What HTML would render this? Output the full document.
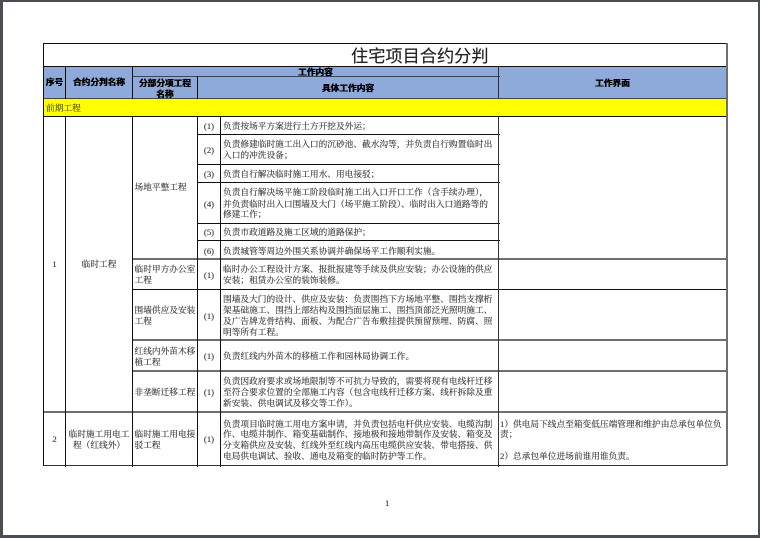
<!DOCTYPE html>
<html lang="zh-CN">
<head>
<meta charset="utf-8">
<title>住宅项目合约分判</title>
<style>
html,body{margin:0;padding:0;background:#fff}
#p{position:relative;width:760px;height:538px;overflow:hidden;background:#fff}
.b{position:absolute;background:#111}
.g{background:#6f6f6f}
#t{position:absolute;left:0;top:0;width:760px;height:538px;filter:blur(.35px);font-family:"Liberation Serif","Noto Serif CJK SC",serif;font-size:8.7px;line-height:12px;color:#3f3f3f;text-shadow:0 0 .4px #5a5550}
#t span{position:absolute;white-space:nowrap}
.c{left:223px}
.n{left:198px;width:22px;text-align:center}
.s{left:134.5px}
.m{left:66px;width:66px;text-align:center}
.o{left:44px;width:21px;text-align:center}
.r{left:500px}
#t .h{font-family:"Liberation Sans","Noto Sans CJK SC",sans-serif;font-weight:700;color:#000;font-size:8.7px;text-align:center;text-shadow:.3px 0 0 #000,-.2px 0 0 #000,0 .2px 0 #000}
</style>
</head>
<body>
<div id="p">
<!-- viewer frame -->
<div class="b" style="left:0;top:0;width:760px;height:2px;background:#4a4d52"></div>
<div class="b" style="left:0;top:0;width:3px;height:538px;background:#4a4d52"></div>
<div class="b" style="left:758px;top:0;width:2px;height:538px;background:#4a4d52"></div>
<div class="b" style="left:0;top:535px;width:760px;height:3px;background:#4a4d52"></div>

<!-- fills -->
<div class="b" style="left:44px;top:67px;width:683px;height:31px;background:#8eaadb"></div>
<div class="b" style="left:44px;top:98px;width:683px;height:18px;background:#ffff00"></div>

<!-- horizontal -->
<div class="b" style="left:43px;top:43px;width:684px;height:1px"></div>
<div class="b" style="left:43px;top:66px;width:684px;height:1px"></div>
<div class="b" style="left:132px;top:76px;width:368px;height:1px;background:#3c4656"></div>
<div class="b" style="left:43px;top:98px;width:684px;height:1px;background:#444a3a"></div>
<div class="b" style="left:43px;top:116px;width:684px;height:1px"></div>
<div class="b" style="left:197px;top:134px;width:303px;height:1px"></div>
<div class="b" style="left:197px;top:164px;width:303px;height:1px"></div>
<div class="b" style="left:197px;top:182px;width:303px;height:1px"></div>
<div class="b" style="left:197px;top:223px;width:303px;height:1px"></div>
<div class="b" style="left:197px;top:240px;width:303px;height:1px"></div>
<div class="b g" style="left:132px;top:258px;width:595px;height:2px"></div>
<div class="b" style="left:132px;top:289px;width:595px;height:1px"></div>
<div class="b g" style="left:132px;top:339px;width:595px;height:2px"></div>
<div class="b g" style="left:132px;top:370px;width:595px;height:2px"></div>
<div class="b g" style="left:43px;top:411px;width:684px;height:2px"></div>
<div class="b" style="left:43px;top:465px;width:684px;height:1px;background:#333"></div>

<!-- vertical: outer -->
<div class="b" style="left:43px;top:43px;width:1px;height:423px"></div>
<div class="b g" style="left:726px;top:43px;width:2px;height:423px"></div>
<!-- vertical: header band only -->
<div class="b" style="left:65px;top:66px;width:1px;height:33px"></div>
<div class="b" style="left:132px;top:66px;width:1px;height:33px"></div>
<div class="b" style="left:197px;top:76px;width:1px;height:23px"></div>
<div class="b" style="left:498px;top:66px;width:1px;height:33px;background:#333"></div>
<!-- vertical: body -->
<div class="b" style="left:65px;top:116px;width:1px;height:351px"></div>
<div class="b" style="left:132px;top:116px;width:1px;height:351px"></div>
<div class="b" style="left:197px;top:116px;width:1px;height:351px"></div>
<div class="b" style="left:220px;top:116px;width:1px;height:351px"></div>
<div class="b" style="left:498px;top:116px;width:1px;height:351px;background:#333"></div>

<div id="t">
<span style="left:351px;top:44px;font:17.2px/24px 'Liberation Sans','Noto Sans CJK SC',sans-serif;color:#222">住宅项目合约分判</span>

<span class="h" style="left:44px;width:21px;top:76px">序号</span>
<span class="h" style="left:66px;width:66px;top:76px">合约分判名称</span>
<span class="h" style="left:133px;width:64px;top:77px">分部分项工程</span>
<span class="h" style="left:133px;width:64px;top:88px">名称</span>
<span class="h" style="left:133px;width:365px;top:66px">工作内容</span>
<span class="h" style="left:198px;width:300px;top:82px">具体工作内容</span>
<span class="h" style="left:499px;width:227px;top:77px">工作界面</span>

<span style="left:46px;top:102px;color:#5a5400">前期工程</span>

<span class="o" style="top:258px">1</span>
<span class="m" style="top:258px">临时工程</span>
<span class="o" style="top:433px">2</span>
<span class="m" style="top:428px">临时施工用电工</span>
<span class="m" style="top:439px">程（红线外）</span>

<span class="s" style="top:181px">场地平整工程</span>
<span class="s" style="top:263px">临时甲方办公室</span>
<span class="s" style="top:274px">工程</span>
<span class="s" style="top:304px">围墙供应及安装</span>
<span class="s" style="top:315px">工程</span>
<span class="s" style="top:345px">红线内外苗木移</span>
<span class="s" style="top:356px">植工程</span>
<span class="s" style="top:386px">非垄断迁移工程</span>
<span class="s" style="top:428px">临时施工用电接</span>
<span class="s" style="top:439px">驳工程</span>

<span class="n" style="top:120px">(1)</span>
<span class="n" style="top:144px">(2)</span>
<span class="n" style="top:168px">(3)</span>
<span class="n" style="top:198px">(4)</span>
<span class="n" style="top:226px">(5)</span>
<span class="n" style="top:245px">(6)</span>
<span class="n" style="top:269px">(1)</span>
<span class="n" style="top:310px">(1)</span>
<span class="n" style="top:350px">(1)</span>
<span class="n" style="top:386px">(1)</span>
<span class="n" style="top:433px">(1)</span>

<span class="c" style="top:120px">负责按场平方案进行土方开挖及外运；</span>
<span class="c" style="top:138px">负责修建临时施工出入口的沉砂池、截水沟等，并负责自行购置临时出</span>
<span class="c" style="top:149px">入口的冲洗设备；</span>
<span class="c" style="top:168px">负责自行解决临时施工用水、用电接驳；</span>
<span class="c" style="top:186px">负责自行解决场平施工阶段临时施工出入口开口工作（含手续办理），</span>
<span class="c" style="top:198px">并负责临时出入口围墙及大门（场平施工阶段）、临时出入口道路等的</span>
<span class="c" style="top:208px">修建工作；</span>
<span class="c" style="top:226px">负责市政道路及施工区域的道路保护；</span>
<span class="c" style="top:245px">负责城管等周边外围关系协调并确保场平工作顺利实施。</span>
<span class="c" style="top:263px">临时办公工程设计方案、报批报建等手续及供应安装；办公设施的供应</span>
<span class="c" style="top:274px">安装；租赁办公室的装饰装修。</span>
<span class="c" style="top:293px">围墙及大门的设计、供应及安装：负责围挡下方场地平整、围挡支撑桁</span>
<span class="c" style="top:304px">架基础施工、围挡上部结构及围挡面层施工、围挡顶部泛光照明施工、</span>
<span class="c" style="top:315px">及广告牌龙骨结构、面板、为配合广告布敷挂提供预留预埋、防腐、照</span>
<span class="c" style="top:326px">明等所有工程。</span>
<span class="c" style="top:350px">负责红线内外苗木的移植工作和园林局协调工作。</span>
<span class="c" style="top:375px">负责因政府要求或场地限制等不可抗力导致的，需要将现有电线杆迁移</span>
<span class="c" style="top:386px">至符合要求位置的全部施工内容（包含电线杆迁移方案、线杆拆除及重</span>
<span class="c" style="top:397px">新安装、供电调试及移交等工作）。</span>
<span class="c" style="top:418px">负责项目临时施工用电方案申请，并负责包括电杆供应安装、电缆沟制</span>
<span class="c" style="top:428px">作、电缆井制作、箱变基础制作、接地极和接地带制作及安装、箱变及</span>
<span class="c" style="top:439px">分支箱供应及安装、红线外至红线内高压电缆供应安装、带电搭接、供</span>
<span class="c" style="top:450px">电局供电调试、验收、通电及箱变的临时防护等工作。</span>

<span class="r" style="top:418px">1）供电局下线点至箱变低压端管理和维护由总承包单位负</span>
<span class="r" style="top:428px">责；</span>
<span class="r" style="top:450px">2）总承包单位进场前谁用谁负责。</span>

<span style="left:385px;top:497px">1</span>
</div>
</div>
</body>
</html>
